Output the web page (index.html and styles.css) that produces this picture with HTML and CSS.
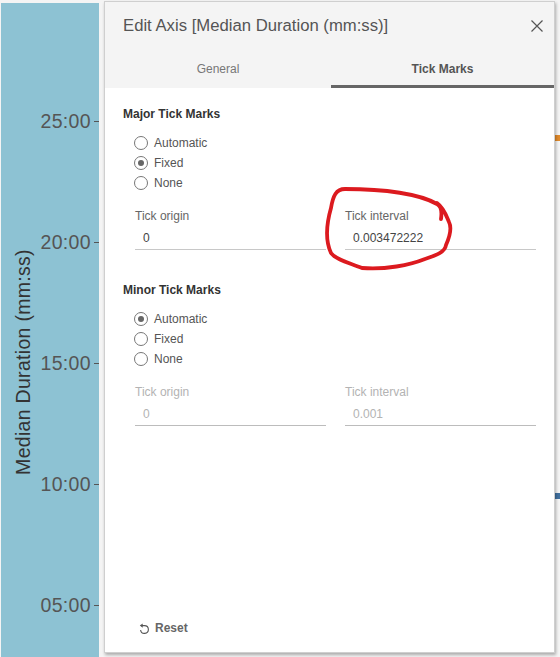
FILE: index.html
```html
<!DOCTYPE html>
<html lang="en">
<head>
<meta charset="utf-8">
<title>Edit Axis</title>
<link rel="stylesheet" href="styles.css">
</head>
<body>
<div class="screen">
  <div class="axis">
    <div class="axis-title">Median Duration (mm:ss)</div>
    <div class="tick"><span>25:00</span><i></i></div>
    <div class="tick"><span>20:00</span><i></i></div>
    <div class="tick"><span>15:00</span><i></i></div>
    <div class="tick"><span>10:00</span><i></i></div>
    <div class="tick"><span>05:00</span><i></i></div>
  </div>
  <div class="mark mark-orange"></div>
  <div class="mark mark-blue"></div>
  <div class="dialog">
    <header class="head">
      <h1>Edit Axis [Median Duration (mm:ss)]</h1>
      <svg class="close" viewBox="0 0 12 12" width="12" height="12"><path d="M.5.5l11 11M11.5.5l-11 11" fill="none" stroke="#555" stroke-width="1.2"/></svg>
    </header>
    <nav class="tabs">
      <div class="tab">General</div>
      <div class="tab active">Tick Marks</div>
    </nav>
    <main class="body">
      <section class="group major">
        <h2>Major Tick Marks</h2>
        <div class="radios">
          <div class="radio"><b></b>Automatic</div>
          <div class="radio on"><b></b>Fixed</div>
          <div class="radio"><b></b>None</div>
        </div>
        <div class="fields">
          <div class="field"><label>Tick origin</label><div class="value">0</div></div>
          <div class="field"><label>Tick interval</label><div class="value">0.003472222</div></div>
        </div>
      </section>
      <section class="group minor">
        <h2>Minor Tick Marks</h2>
        <div class="radios">
          <div class="radio on"><b></b>Automatic</div>
          <div class="radio"><b></b>Fixed</div>
          <div class="radio"><b></b>None</div>
        </div>
        <div class="fields disabled">
          <div class="field"><label>Tick origin</label><div class="value">0</div></div>
          <div class="field"><label>Tick interval</label><div class="value">0.001</div></div>
        </div>
      </section>
      <footer class="foot">
        <svg class="reset-icon" viewBox="0 0 12 12" width="12" height="12"><path d="M3.2 2.6h3.300a3.900 3.900 0 1 1-3.900 4.400" fill="none" stroke="#555" stroke-width="1.100"/><path d="M4.700.4v4.400L1.800 2.600z" fill="#555"/></svg>
        <span>Reset</span>
      </footer>
    </main>
  </div>
  <svg class="scribble" viewBox="0 0 560 657" width="560" height="657"><path d="M441 219C442 212 441 206 437 204C420 194 385 189 345 189C336 189 333 196 331 208C327 222 325 240 331 253C336 260 350 263 362 268C385 270 410 265 425 259C437 255 445 252 446 245C450 236 452 228 449 222C446 215 444 208 437 203" fill="none" stroke="#dc1a1f" stroke-width="3.800" stroke-linecap="round" stroke-linejoin="round"/></svg>
</div>
</body>
</html>
```
FILE: styles.css
```css
* { box-sizing: border-box; }
html, body { margin: 0; padding: 0; background: #fff; }
body { font-family: "Liberation Sans", Arial, sans-serif; }
.screen { position: relative; width: 560px; height: 657px; overflow: hidden; background: #f4f4f4; }
.axis { position: absolute; left: 1px; top: 3px; width: 98px; height: 654px; background: #8dc2d3; padding-top: 106px; display: flex; flex-direction: column; align-items: flex-end; }
.axis-title { position: absolute; left: -98px; top: 349px; width: 240px; height: 20px; line-height: 20px; text-align: center; transform: rotate(-90deg); font-size: 19.5px; color: #333; letter-spacing: .3px; white-space: nowrap; }
.tick { height: 121px; display: flex; align-items: flex-start; justify-content: flex-end; width: 100%; flex: none; }
.tick span { font-size: 19.5px; line-height: 24px; height: 24px; color: #555; letter-spacing: .35px; }
.tick i { display: block; width: 5px; height: 1px; background: #555; margin-top: 12px; margin-left: 3px; }
.mark { position: absolute; left: 555px; width: 5px; }
.mark-orange { top: 135px; height: 6px; background: #e08a2b; }
.mark-blue { top: 493px; height: 6px; background: #41709f; }
.dialog { position: absolute; left: 104px; top: 1px; width: 451px; height: 652px; background: #fff; border: 1px solid #cfcfcf; box-shadow: 1px 2px 3px rgba(0,0,0,.3); display: flex; flex-direction: column; }
.head { height: 47px; flex: none; background: #f4f4f4; display: flex; align-items: center; justify-content: space-between; padding: 0 11px 0 18px; }
.head h1 { margin: 0; font-size: 16.700px; font-weight: 400; color: #555; white-space: nowrap; }
.close { display: block; }
.tabs { flex: none; height: 39px; background: #f4f4f4; display: flex; }
.tab { flex: 1; text-align: center; font-size: 12px; line-height: 16px; padding-top: 12px; color: #777; }
.tab.active { flex: 0 0 223px; color: #555; font-weight: 700; border-bottom: 3px solid #666; }
.body { flex: 1; padding: 0 18px; display: flex; flex-direction: column; position: relative; }
.group h2 { margin: 0; font-size: 12px; line-height: 16px; font-weight: 700; color: #333; }
.major { padding-top: 18px; }
.minor { padding-top: 32px; }
.radios { padding: 11px 0 0 11px; display: flex; flex-direction: column; }
.radio { height: 20px; display: flex; align-items: center; font-size: 12px; color: #555; }
.radio b { width: 14px; height: 14px; border: 1px solid #777; border-radius: 50%; margin-right: 6px; display: flex; align-items: center; justify-content: center; background: #fff; }
.radio.on b::after { content: ""; width: 6px; height: 6px; border-radius: 50%; background: #666; }
.fields { display: flex; gap: 19px; padding: 15px 0 0 12px; }
.field { flex: 1; }
.field label { display: block; font-size: 12px; line-height: 16px; color: #666; }
.value { margin-top: 1px; height: 25px; padding: 5px 0 0 8px; font-size: 12px; line-height: 16px; color: #444; border-bottom: 1px solid #c8c8c8; }
.disabled label, .disabled .value { color: #b3b3b3; }
.disabled .value { border-bottom-color: #bcbcbc; }
.foot { margin-top: auto; height: 32px; display: flex; align-items: flex-start; gap: 5px; padding: 0 0 0 15px; font-size: 12px; font-weight: 700; color: #666; line-height: 16px; }
.reset-icon { margin-top: 3px; }
.scribble { position: absolute; left: 0; top: 0; pointer-events: none; }
```
